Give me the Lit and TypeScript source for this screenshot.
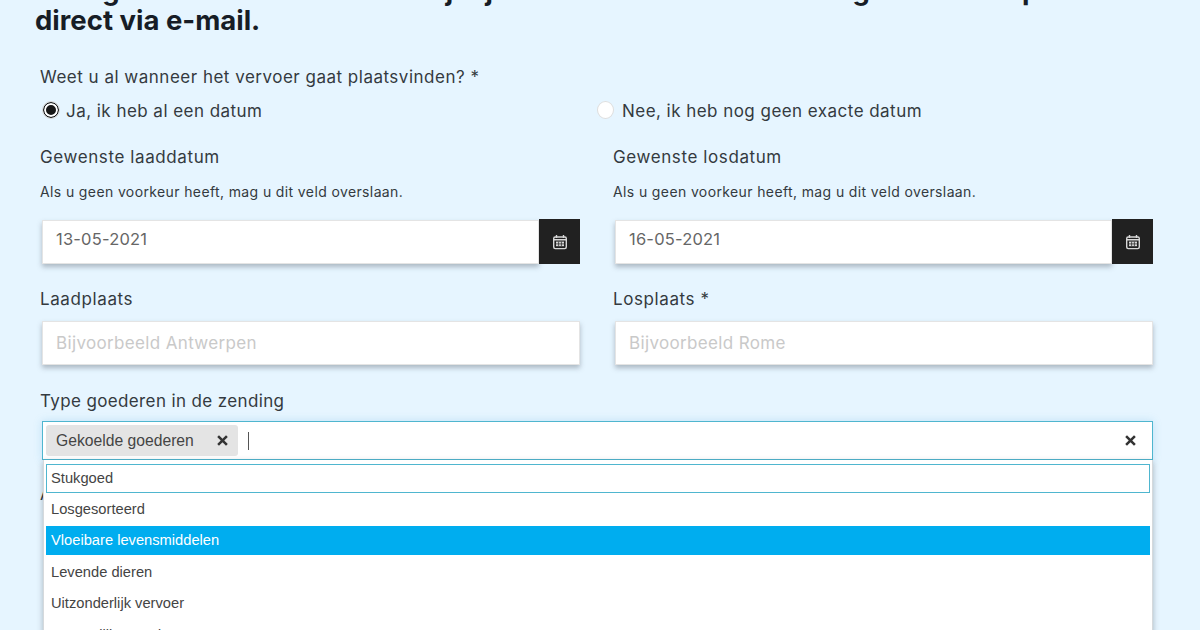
import { LitElement, html, css } from "lit";
import { customElement } from "lit/decorators.js";

const calendar = html`<svg viewBox="0 0 16 16" width="16" height="16" fill="none" stroke="#d8d8d8" stroke-width="1.4">
  <rect x="1.7" y="3" width="12.6" height="11.6" rx="1.5"></rect>
  <path d="M4.5 1v3M11.5 1v3M2 5.8h12"></path>
  <rect x="4" y="7.6" width="8" height="4.6" fill="#d8d8d8" stroke="none"></rect>
  <path d="M6.6 7.6v4.6M9.4 7.6v4.6M4 9.9h8" stroke="#222" stroke-width=".7"></path>
</svg>`;

const cross = (s: number) => html`<svg viewBox="0 0 10 10" width=${s} height=${s} stroke="#333" stroke-width="2.3" fill="none"><path d="M1 1l8 8M9 1l-8 8"></path></svg>`;

@customElement("app-root")
export class AppRoot extends LitElement {
  static styles = css`
    :host { display: block; width: 1200px; height: 630px; overflow: hidden; background: #e6f5ff; font-family: Inter, "Open Sans", sans-serif; color: #343a40; }
    .page { padding: 0 47px 0 40px; }
    h1 { margin: -25px 0 0 -5px; font: 700 27.5px/30px Inter, sans-serif; color: #171d26; white-space: nowrap; }
    .question { margin-top: 30px; font-size: 17px; line-height: 24px; letter-spacing: .5px; }
    .radios { display: grid; grid-template-columns: 556px 1fr; margin-top: 10px; height: 24px; font-size: 17px; line-height: 24px; letter-spacing: .46px; }
    .radio { display: flex; align-items: center; }
    .dot { box-sizing: border-box; border-radius: 50%; flex: none; }
    .dot.on { width: 16px; height: 16px; margin: -2px 7px 0 3px; border: 1.5px solid #111; background: #171717; box-shadow: inset 0 0 0 2px #fff; outline: 1px solid #d8d8d8; }
    .dot.off { width: 17px; height: 18px; background: #fff; border: 1px solid #dedede; margin: -3px 8px 0 1px; }
    .cols { display: grid; grid-template-columns: 540px 540px; column-gap: 33px; }
    .first { margin-top: 22px; }
    .label { font-size: 17px; line-height: 24px; letter-spacing: .6px; }
    .select-wrap .label { letter-spacing: .37px; }
    .hint { margin-top: 13px; font-size: 14px; line-height: 20px; letter-spacing: .38px; }
    .date { display: flex; margin-top: 17px; height: 45px; }
    .field { flex: 1; margin-left: 2px; height: 44px; margin-top: 1px; box-sizing: border-box; background: #fff; border: 1px solid #e4e4e4; box-shadow: 0 3px 5px rgba(60,70,80,.35); padding-left: 13px; font-size: 16.5px; line-height: 37px; color: #666; letter-spacing: .2px; }
    .addon { width: 41px; background: #212121; display: flex; align-items: center; justify-content: center; }
    .f2 { margin-top: 23px; }
    .plain { margin-top: 10px; height: 44px; font-size: 17px; line-height: 42px; color: #c9c9c9; letter-spacing: .35px; }
    .select-wrap { position: relative; margin-top: 24px; }
    .select { margin: 8px 0 0 2px; height: 39px; width: 1111px; box-sizing: border-box; background: #fff; border: 1px solid #4fb6cf; display: flex; align-items: center; padding: 0 16px 0 3px; box-shadow: 0 0 8px rgba(80,170,220,.25); }
    .chip { display: flex; align-items: center; height: 31px; width: 192px; box-sizing: border-box; padding: 0 10px 0 10px; justify-content: space-between; background: #e4e4e4; border-radius: 3px; font: 15.7px "Liberation Sans", sans-serif; color: #444; }
    .caret { width: 1px; height: 18px; margin-left: 10px; background: #555; }
    .clear { margin-left: auto; display: flex; }
    .behind { margin-top: 22px; font-size: 17px; line-height: 24px; }
    .menu { position: absolute; left: 3px; top: 71px; width: 1110px; height: 220px; box-sizing: border-box; background: #fff; padding: 4px 2px 0; border: 1px solid #d5d9dc; border-top: 0; box-shadow: 0 2px 6px rgba(50,60,70,.35); font: 14.7px/29px "Liberation Sans", sans-serif; color: #444; }
    .search { height: 29px; box-sizing: border-box; border: 1px solid #4fb6cf; padding-left: 4px; line-height: 27px; margin-bottom: 2px; }
    .opt { height: 29px; padding-left: 5px; margin-bottom: 2.4px; }
    .opt.sel { background: #00adef; color: #fff; }
  `;

  render() {
    const date = (v: string) => html`<div class="date"><div class="field">${v}</div><div class="addon">${calendar}</div></div>`;
    return html`<div class="page">
      <h1>De ingevulde offerte is echt vrijblijvend en na invullen ontvangt u deze nu per<br>direct via e-mail.</h1>
      <div class="question">Weet u al wanneer het vervoer gaat plaatsvinden? *</div>
      <div class="radios">
        <label class="radio"><span class="dot on"></span>Ja, ik heb al een datum</label>
        <label class="radio"><span class="dot off"></span>Nee, ik heb nog geen exacte datum</label>
      </div>
      <div class="cols first">
        <div><div class="label">Gewenste laaddatum</div><div class="hint">Als u geen voorkeur heeft, mag u dit veld overslaan.</div>${date("13-05-2021")}</div>
        <div><div class="label">Gewenste losdatum</div><div class="hint">Als u geen voorkeur heeft, mag u dit veld overslaan.</div>${date("16-05-2021")}</div>
      </div>
      <div class="cols f2">
        <div><div class="label">Laadplaats</div><div class="field plain">Bijvoorbeeld Antwerpen</div></div>
        <div><div class="label">Losplaats *</div><div class="field plain">Bijvoorbeeld Rome</div></div>
      </div>
      <div class="select-wrap">
        <div class="label">Type goederen in de zending</div>
        <div class="select">
          <span class="chip">Gekoelde goederen ${cross(11)}</span>
          <span class="caret"></span>
          <span class="clear">${cross(11)}</span>
        </div>
        <div class="behind">Aantal</div>
        <div class="menu">
          <div class="search">Stukgoed</div>
          <div class="opt">Losgesorteerd</div>
          <div class="opt sel">Vloeibare levensmiddelen</div>
          <div class="opt">Levende dieren</div>
          <div class="opt">Uitzonderlijk vervoer</div>
          <div class="opt">Gevaarlijke goederen</div>
        </div>
      </div>
    </div>`;
  }
}
